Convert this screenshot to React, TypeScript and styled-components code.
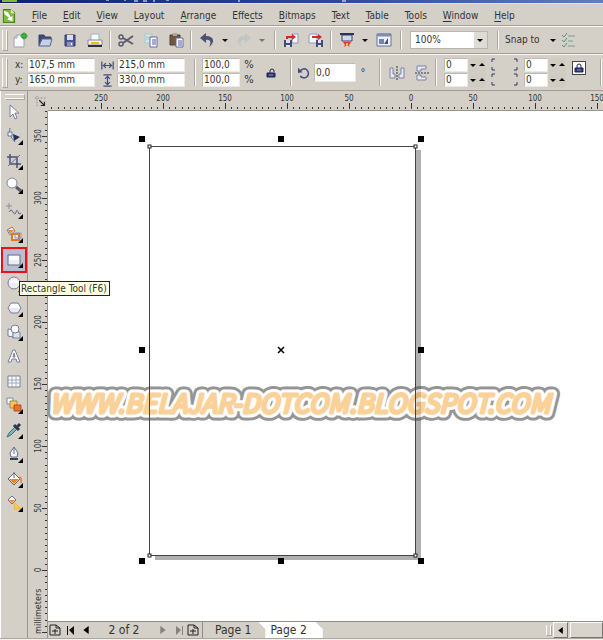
import React from "react";
import styled, { createGlobalStyle, css } from "styled-components";

const Global = createGlobalStyle`
  * { box-sizing: border-box; }
  html, body, #root { height: 100%; }
  body {
    margin: 0;
    overflow: hidden;
    background: #d4d0c8;
    color: #333;
    font: 10px/14px "DejaVu Sans Condensed", "DejaVu Sans", sans-serif;
  }
  button, input, select { font: inherit; color: inherit; margin: 0; }
  button { padding: 0; border: 0; background: none; }
  svg { display: block; flex: none; }
`;

/* ---------- shell ---------- */

const Shell = styled.div`
  height: 100vh;
  display: flex;
  flex-direction: column;
  background: #d4d0c8;
  border-bottom: 1px solid #f4f2ee;
`;

const TitleBar = styled.header`
  height: 4px;
  flex: none;
  overflow: hidden;
  background: linear-gradient(90deg, #0a246a, #2b4a94 55%, #5c82bd);
  border-bottom: 1px solid #e4e2dd;
`;

const MenuBar = styled.nav`
  height: 22px;
  flex: none;
  display: flex;
  align-items: center;
  gap: 16px;
  padding: 2px 4px 0 2px;
  border-bottom: 1px solid #a5a29b;
`;

const MenuButton = styled.button`
  line-height: 16px;
  white-space: nowrap;
  u { text-underline-offset: 2px; }
`;

const Toolbar = styled.div<{ $tall?: boolean }>`
  height: ${(p) => (p.$tall ? 37 : 28)}px;
  flex: none;
  display: flex;
  align-items: center;
  overflow: hidden;
  padding-left: 2px;
  border-top: 1px solid #f7f6f3;
  border-bottom: 1px solid #a09d96;
`;

const Grip = styled.span<{ $flat?: boolean }>`
  flex: none;
  align-self: ${(p) => (p.$flat ? "center" : "stretch")};
  ${(p) =>
    p.$flat
      ? css`width: 19px; height: 5px; border-width: 1px 0;`
      : css`width: 5px; margin: 3px 0; border-width: 0 1px;`}
  border-style: solid;
  border-color: #fbfaf8;
  box-shadow: 1px 1px 0 #aaa79f;
`;

const Rule = styled.span<{ $before?: number; $after?: number }>`
  flex: none;
  align-self: stretch;
  width: 2px;
  margin: 4px ${(p) => p.$after ?? 2}px 4px ${(p) => p.$before ?? 2}px;
  border-left: 1px solid #aaa79f;
  border-right: 1px solid #fbfaf8;
`;

const IconButton = styled.button<{ $narrow?: boolean }>`
  flex: none;
  width: ${(p) => (p.$narrow ? 12 : 25)}px;
  height: 22px;
  display: grid;
  place-items: center;
`;

const SelectBox = styled.div`
  flex: none;
  width: 78px;
  height: 18px;
  display: grid;
  grid-template-columns: 1fr 14px;
  align-items: center;
  background: linear-gradient(90deg, #fff 63px, #dedbd4 63px);
  border: 1px solid #b9b6ae;
`;

const Select = styled.select`
  grid-area: 1 / 1 / 2 / 3;
  width: 100%;
  height: 16px;
  padding: 0 16px 0 4px;
  border: 0;
  background: none;
  appearance: none;
`;

const SelectArrow = styled.span`
  grid-area: 1 / 2;
  justify-self: center;
  pointer-events: none;
`;

const SnapButton = styled.button`
  display: flex;
  align-items: center;
  gap: 10px;
  white-space: nowrap;
`;

/* ---------- property bar ---------- */

const FieldGrid = styled.div<{ $cols: string; $before?: number }>`
  flex: none;
  display: grid;
  grid-template-columns: ${(p) => p.$cols};
  grid-auto-rows: 14px;
  row-gap: 1px;
  align-items: center;
  margin-left: ${(p) => p.$before ?? 0}px;
`;

const Caption = styled.label`
  padding-left: 1px;
`;

const Field = styled.input<{ $tall?: boolean }>`
  width: 100%;
  min-width: 0;
  height: ${(p) => (p.$tall ? 19 : 14)}px;
  padding: 0 1px;
  border: 1px solid #bfbcb4;
  border-right-color: #eceae6;
  border-bottom-color: #eceae6;
  background: #fff;
`;

const Spinner = styled.div`
  height: 14px;
  display: grid;
  grid-template-columns: 24px 9px 9px;
  border-right: 1px solid #fbfaf8;
  border-bottom: 1px solid #fbfaf8;
`;

const SpinButton = styled.button`
  display: grid;
  place-items: center;
  background: #d0ccc2;
`;

const Centered = styled.span<{ $w: number }>`
  flex: none;
  width: ${(p) => p.$w}px;
  display: grid;
  place-items: center;
  font-size: 11px;
`;

const LockButton = styled.button`
  flex: none;
  width: 14px;
  height: 14px;
  margin: 0 14px 10px 6px;
  display: grid;
  place-items: center;
  background: #fff;
  border: 1px solid #444;
`;

/* ---------- work area ---------- */

const Work = styled.main`
  flex: 1;
  min-height: 0;
  display: grid;
  grid-template-columns: 28px 20px minmax(0, 1fr);
  grid-template-rows: 20px minmax(0, 1fr) 17px;
  border-bottom: 1px solid #aaa79f;
`;

const Toolbox = styled.aside`
  grid-row: 1 / 4;
  display: flex;
  flex-direction: column;
  align-items: center;
  padding-top: 3px;
  border-left: 1px solid #fff;
  border-right: 1px solid #98958e;
`;

const ToolList = styled.div`
  height: 415px;
  width: 100%;
  margin-top: 1px;
  display: flex;
  flex-direction: column;
  justify-content: space-between;
`;

const ToolItem = styled.div`
  position: relative;
  height: 24px;
`;

const ToolButton = styled.button<{ $active?: boolean }>`
  width: 26px;
  height: 24px;
  display: grid;
  place-items: center;
  ${(p) =>
    p.$active &&
    css`
      height: 26px;
      background: #b9bdcd;
      border: 2px solid #ec1018;
    `}
`;

const Flyout = styled.svg`
  position: absolute;
  right: 4px;
  bottom: 3px;
`;

const Tooltip = styled.div`
  position: absolute;
  z-index: 2;
  left: 18px;
  top: 34px;
  padding: 0 2px 0 1px;
  background: #ffffe1;
  border: 1px solid #222;
  line-height: 13px;
  white-space: nowrap;
`;

const Corner = styled.div`
  display: grid;
  place-items: center;
  padding-left: 4px;
`;

const HorizontalRuler = styled.div`
  overflow: hidden;
  border-bottom: 1px solid #99968f;
`;

const VerticalRuler = styled.div`
  grid-row: 2 / 4;
  grid-column: 2;
  overflow: hidden;
  border-right: 1px solid #99968f;
`;

const Canvas = styled.section`
  grid-column: 3;
  overflow: hidden;
  background: #fff;
`;

const PageBar = styled.footer`
  grid-column: 3;
  display: flex;
  align-items: stretch;
  border-top: 1px solid #8f8c86;
  overflow: hidden;
  font-size: 12px;
`;

const PagerButton = styled.button<{ $w: number }>`
  flex: none;
  width: ${(p) => p.$w}px;
  display: grid;
  place-items: center;
`;

const PageCount = styled.span`
  flex: none;
  width: 60px;
  text-align: center;
  line-height: 16px;
`;

const TabStrip = styled.div`
  flex: 1;
  display: flex;
  margin-left: 2px;
  border-left: 1px solid #8f8c86;
`;

const Tab = styled.button<{ $active?: boolean }>`
  flex: none;
  padding: 0 12px;
  line-height: 16px;
  ${(p) =>
    p.$active &&
    css`
      margin-left: -5px;
      padding-right: 16px;
      background: #fff;
      clip-path: polygon(0 0, 57px 0, 100% 7px, 100% 100%, 7px 100%, 7px 7px);
    `}
`;

const ScrollTrack = styled.div`
  flex: none;
  width: 57px;
  display: grid;
  grid-template-columns: 5px 15px minmax(0, 1fr);
  gap: 2px;
`;

const ScrollButton = styled.button`
  display: grid;
  place-items: center;
  background: #d8d4cc;
  border: 1px solid #fbfaf8;
  border-right-color: #77746e;
  border-bottom-color: #77746e;
`;

/* ---------- drawings ---------- */

const Icon = ({ children, size = 16, box = 16 }: { children: React.ReactNode; size?: number; box?: number }) => (
  <svg width={size} height={size} viewBox={`0 0 ${box} ${box}`} fill="none" aria-hidden="true">
    {children}
  </svg>
);

const Triangle = ({ dir = "down", fill = "#000", size = 6 }: { dir?: "down" | "up" | "left" | "right"; fill?: string; size?: number }) => {
  const d = { down: "M0 2h6L3 5z", up: "M0 4h6L3 1z", left: "M5 0v6L1 3z", right: "M1 0v6l4-3z" }[dir];
  return (
    <svg width={size} height={size} viewBox="0 0 6 6" fill={fill} aria-hidden="true">
      <path d={d} />
    </svg>
  );
};

const ink = "#454b78";

const CorelLogo = () => (
  <Icon size={14}>
    <path d="M1 0h9l5 4v12H1z" fill="#3f7a14" />
    <path d="M2 1h8v4h4v10H2z" fill="#7fbb35" />
    <path d="M2 2l5 2 3 5 2-1v6l-6-2 2-2-5-4z" fill="#fff" />
    <path d="M10 0v5h5z" fill="#d8edbd" />
  </Icon>
);

const icons: Record<string, React.ReactNode> = {
  New: <Icon><path d="M2 6l3-3h7v12H2z" fill="#fafbff" stroke="#9ba1b5" /><path d="M2 6h3V3" stroke="#9ba1b5" /><circle cx="12" cy="4" r="3" fill="#239b22" /><path d="M12 0v8M8 4h8" stroke="#53b94a" /></Icon>,
  Open: <Icon><path d="M2 14V3h5l1 2h6v3" fill="#3f4a78" stroke="#374069" /><path d="M2 14l3-7h10l-2 7z" fill="#c6d0ea" stroke="#596493" /></Icon>,
  Save: <Icon><path d="M3 3h10v11H3z" fill="#4d5590" stroke="#30396f" /><path d="M5 3h6v5H5z" fill="#d8ddf0" /><path d="M5 10h6v4H5z" fill="#8890bd" /><path d="M9 11h1v2H9z" fill="#fff" /></Icon>,
  Print: <Icon><path d="M4 8V2h8v6" fill="#f4fbff" stroke="#9fb4bf" /><path d="M1 8h14v5H1z" fill="#f6f3ea" stroke="#8a8a96" /><path d="M4 11h8" stroke="#e4bc2c" strokeWidth="2" /><path d="M1 14h14" stroke="#30303d" strokeWidth="2" /></Icon>,
  Cut: <Icon><path d="M5 6l10 6M5 11l10-7" stroke="#5c5d68" strokeWidth="2" /><circle cx="3" cy="5" r="2" stroke="#565b72" strokeWidth="1.5" /><circle cx="3" cy="12" r="2" stroke="#565b72" strokeWidth="1.5" /></Icon>,
  Copy: <Icon><path d="M2 2h7v9H2z" fill="#d4e8e8" stroke="#a0cccc" /><path d="M3 5h5M3 7h5" stroke="#9bcaca" /><path d="M7 5h7v10H7z" fill="#fff" stroke="#626aa4" /><path d="M9 8h4M9 10h4M9 12h4" stroke="#4a59aa" /></Icon>,
  Paste: <Icon><path d="M2 3h10v10H2z" fill="#72583d" stroke="#51402f" /><path d="M5 1h4v3H5z" fill="#aaa6a0" /><path d="M8 6h7v9H8z" fill="#fff" stroke="#626aa4" /><path d="M10 9h4M10 11h4M10 13h4" stroke="#4a59aa" /></Icon>,
  Undo: <Icon><path d="M7 1L1 6l6 5V8c4-1 6 2 3 7 6-4 6-11-3-11z" fill="#4c5270" /></Icon>,
  Redo: <Icon><path d="M9 1l6 5-6 5V8c-4-1-6 2-3 7-6-4-6-11 3-11z" fill="#c1c5c8" /></Icon>,
  Import: <Icon><path d="M9 2h6v9H9z" fill="#f4f6ff" stroke="#8c97bd" /><path d="M1 8h8v7H1z" fill={ink} /><path d="M3 8h4v3H3zM3 13h4v2H3z" fill="#dfe2f2" /><path d="M3 7V4h6V2l4 3-4 3V6H5v1z" fill="#d42a28" /></Icon>,
  Export: <Icon><path d="M1 3l2-1h6v9H1z" fill="#f4f6ff" stroke="#8c97bd" /><path d="M8 8h7v7H8z" fill={ink} /><path d="M10 8h3v3h-3zM10 13h3v2h-3z" fill="#dfe2f2" /><path d="M4 4h6V2l4 3-4 3V6H4z" fill="#d42a28" /></Icon>,
  Launch: <Icon><path d="M3 3h10v6H3z" fill="#cbd9e9" stroke="#3a4269" /><path d="M1 2h14" stroke="#2d345c" strokeWidth="2" /><path d="M4 10h8l-2 3 1 2-3-2-3 2 1-2z" fill="#e33b20" /><path d="M7 11h2v2H7z" fill="#ffc229" /></Icon>,
  Welcome: <Icon><path d="M1 2h14v12H1z" fill="#eff3ff" stroke="#63719d" /><path d="M1 3h14" stroke="#7e8bb3" strokeWidth="3" /><path d="M3 7h5v5H3z" fill="#7482af" /><path d="M8 12l4-6v6z" fill="#444f83" /></Icon>,
};

const SnapIcon = () => (
  <Icon><path d="M2 3l2 2 3-4M2 8l2 2 3-4M2 13l2 2 3-4" stroke="#5b8f87" /><path d="M8 4h7M8 9h5M8 14h7" stroke="#7a9c96" /></Icon>
);

const Padlock = ({ open }: { open?: boolean }) => (
  <Icon size={10} box={10}>
    <path d={open ? "M4 5V3q0-2 2-2t2 2v1" : "M3 5V3q0-2 2-2t2 2v2"} stroke="#20264f" />
    <path d="M1 5h8v4H1z" fill="#303873" stroke="#1d234e" />
    <path d="M3 7h4" stroke="#8992cf" />
  </Icon>
);

const tools: { name: string; fly?: boolean; active?: boolean; art: React.ReactNode }[] = [
  { name: "Pick Tool", art: <path d="M4 1v12l3-3 2 5 2-1-2-5h4z" fill="#fff" stroke="#7b829e" /> },
  { name: "Shape Tool", fly: true, art: <><path d="M4 0q-2 7 5 14" stroke="#69779c" /><path d="M2 4h4v4H2z" fill="#e7f4ff" stroke="#69779c" /><path d="M7 6l7 3-6 4z" fill="#252e64" /></> },
  { name: "Crop Tool", fly: true, art: <><path d="M4 1v10h11M1 4h10v11" stroke="#4b5174" strokeWidth="1.5" /><path d="M2 13L14 2" stroke="#6b7090" /></> },
  { name: "Zoom Tool", fly: true, art: <><path d="M10 10l5 4" stroke="#5c5964" strokeWidth="3" /><circle cx="6" cy="6" r="5" fill="#f8fcff" stroke="#81889e" /></> },
  { name: "Freehand Tool", fly: true, art: <><path d="M3 1v6M0 4h6" stroke="#8b8e9c" /><path d="M3 10q2-4 4 0t3 0 3 2l2-1" stroke="#5d6690" /></> },
  { name: "Smart Fill Tool", fly: true, art: <><path d="M1 4l5-3 3 4-5 4z" fill="#f2f2fa" stroke="#777e99" /><path d="M2 4h6l-4 4z" fill="#e78728" /><path d="M6 8h7v6H6z" fill="#efeeff" stroke="#df7922" strokeWidth="2" /><path d="M9 7h6v5H9z" stroke="#8991b4" /></> },
  { name: "Rectangle Tool", fly: true, active: true, art: <><rect x="2" y="3" width="12" height="10" fill="#eceef5" stroke="#666d8d" /><path d="M3 4h10v4H3z" fill="#fff" /></> },
  { name: "Ellipse Tool", fly: true, art: <><circle cx="8" cy="8" r="6" fill="#eceef5" stroke="#777e99" /><path d="M4 8q0-5 8-2v2z" fill="#fff" /></> },
  { name: "Polygon Tool", fly: true, art: <><path d="M5 3h7l3 5-3 5H5L2 8z" fill="#e8eaf3" stroke="#777e99" /><path d="M5 4h7l2 4H3z" fill="#fff" /></> },
  { name: "Basic Shapes", fly: true, art: <><path d="M2 5l6 1-1 7-5-1z" fill="#f6f7ff" stroke="#777e99" /><path d="M7 8h7v6H7z" fill="#dfe2ee" stroke="#777e99" /><circle cx="9" cy="5" r="4" fill="#f8f9ff" stroke="#777e99" /></> },
  { name: "Text Tool", art: <path d="M2 14L7 2h2l5 12h-3l-1-3H6l-1 3zM7 9h2L8 5z" fill="#fff" stroke="#777e99" /> },
  { name: "Table Tool", art: <><path d="M2 3h12v11H2z" fill="#fff" stroke="#777e99" /><path d="M6 3v11M10 3v11M2 7h12M2 10h12" stroke="#a0a5bc" /></> },
  { name: "Interactive Blend", fly: true, art: <><path d="M1 1h6v6H1z" fill="#f5f8ff" stroke="#818ca9" /><path d="M4 4h7v7H4z" fill="#ffc34e" stroke="#a5894f" /><path d="M8 8h7v6H8z" fill="#f36c21" stroke="#af5225" /></> },
  { name: "Eyedropper Tool", fly: true, art: <><path d="M1 15l2-4 6-6 2 2-6 6z" fill="#7fb3b2" stroke="#477078" /><path d="M8 3l5 5M10 6l4-4" stroke="#303452" strokeWidth="3" /></> },
  { name: "Outline Pen", fly: true, art: <><path d="M5 11L4 7l4-6 4 6-1 4z" fill="#f8faff" stroke="#666d8d" /><path d="M8 2v6" stroke="#666d8d" /><path d="M4 13h8" stroke="#39405d" strokeWidth="2" /></> },
  { name: "Fill Tool", fly: true, art: <><path d="M8 2l6 6-6 6-6-6z" fill="#fff" stroke="#616780" /><path d="M3 8h10l-5 5z" fill="#ec8520" /><path d="M8 7V1" stroke="#616780" /><path d="M13 6q3 1 2 6" stroke="#e98a5c" strokeWidth="2" /></> },
  { name: "Interactive Fill", fly: true, art: <><path d="M6 1l4 4-4 4-4-4z" fill="#fff" stroke="#666c83" /><path d="M3 5h6L6 8z" fill="#e88c31" /><path d="M9 8l2 2 4 4H8z" fill="#ffc951" stroke="#f4b23d" /></> },
];

const MM = 62 / 50;

const HRuler = () => (
  <svg width="100%" height="19" aria-hidden="true" shapeRendering="crispEdges">
    {Array.from({ length: 180 }, (_, i) => {
      const mm = (i - 58) * 5;
      const x = Math.round(363 + mm * MM);
      const h = mm % 50 === 0 ? 6 : 2;
      return <rect key={i} x={x} y={18 - h} width="1" height={h} fill="#333" />;
    })}
    {[-250, -200, -150, -100, -50, 0, 50, 100, 150].map((mm) => (
      <text key={mm} x={363 + mm * MM} y="10" fontSize="8" textAnchor="middle" fill="#333">{Math.abs(mm)}</text>
    ))}
  </svg>
);

const VRuler = () => (
  <svg width="19" height="100%" aria-hidden="true" shapeRendering="crispEdges">
    {Array.from({ length: 140 }, (_, i) => {
      const mm = 370 - i * 5;
      const y = Math.round(459 - mm * MM);
      const w = mm % 50 === 0 ? 5 : 2;
      return <rect key={i} x={19 - w} y={y} width={w} height="1" fill="#333" />;
    })}
    {[350, 300, 250, 200, 150, 100, 50, 0].map((mm) => (
      <text key={mm} transform={`translate(13 ${459 - mm * MM}) rotate(-90)`} fontSize="8" textAnchor="middle" fill="#333">{mm}</text>
    ))}
    <text transform="translate(13 523) rotate(-90)" fontSize="9" fill="#333">millimeters</text>
  </svg>
);

const Watermark = styled.text`
  font: italic 400 26px "Noto Sans CJK SC", sans-serif;
  stroke-linejoin: round;
`;

const Drawing = () => {
  const mark = "WWW.BELAJAR-DOTCOM.BLOGSPOT.COM";
  return (
    <svg width="100%" height="100%" role="img" aria-label="Page 2 drawing">
      <path d="M107 444h266V39h-5v405z" fill="#b0b0b0" />
      <path d="M107 444h266v5H107z" fill="#b0b0b0" />
      <g opacity="0.6">
        <Watermark x="2" y="302" fill="#505050" stroke="#505050" strokeWidth="15" aria-hidden="true">{mark}</Watermark>
        <Watermark x="2" y="302" fill="#fff" stroke="#fff" strokeWidth="9" aria-hidden="true">{mark}</Watermark>
        <Watermark x="2" y="302" fill="#f8b457" stroke="#f8b457" strokeWidth="3">{mark}</Watermark>
      </g>
      <path d="M101.500 35.500h266v409h-266z" stroke="#444" fill="none" />
      {[101, 367].map((x) => [35, 444].map((y) => (
        <rect key={`${x}-${y}`} x={x - 1} y={y - 1} width="3" height="3" fill="#fff" stroke="#222" />
      )))}
      {[94, 233, 373].map((x) => [28, 239, 450].map((y) =>
        x === 233 && y === 239 ? (
          <path key="centre" d="M230 236l6 6m0-6l-6 6" stroke="#000" strokeWidth="1.500" />
        ) : (
          <rect key={`${x}-${y}`} x={x - 3} y={y - 3} width="6" height="6" fill="#000" />
        )
      ))}
    </svg>
  );
};

const PlusPage = () => (
  <Icon size={12} box={12}>
    <path d="M1 1h6l4 3v7H1z" stroke="#222" /><path d="M7 1v3h4M6 5v5M3 7h6" stroke="#222" />
  </Icon>
);

const CornerMarks = () => (
  <svg width="28" height="14" fill="none" stroke="#333b5e" aria-hidden="true">
    <path d="M4 1H1v3M1 9v3h3M23 1h3v3M26 9v3h-3" />
  </svg>
);

/* ---------- page ---------- */

const menus: [string, string, string][] = [
  ["", "F", "ile"], ["", "E", "dit"], ["", "V", "iew"], ["", "L", "ayout"], ["", "A", "rrange"], ["Effe", "c", "ts"],
  ["", "B", "itmaps"], ["", "T", "ext"], ["", "T", "able"], ["T", "o", "ols"], ["", "W", "indow"], ["", "H", "elp"],
];

const Tool = ({ name }: { name: string }) => <IconButton aria-label={name}>{icons[name]}</IconButton>;

const More = ({ name, muted }: { name: string; muted?: boolean }) => (
  <IconButton $narrow aria-label={name}><Triangle fill={muted ? "#77746e" : "#111"} /></IconButton>
);

const Spin = ({ label }: { label: string }) => (
  <Spinner>
    <Field aria-label={label} defaultValue="0" />
    <SpinButton aria-label={`Decrease ${label}`}><Triangle /></SpinButton>
    <SpinButton aria-label={`Increase ${label}`}><Triangle dir="up" /></SpinButton>
  </Spinner>
);

export default function App() {
  return (
    <Shell>
      <Global />
      <TitleBar>
        <svg width="360" height="3" aria-hidden="true">
          <path d="M2 0h15v2H2z" fill="#85b82f" />
          <path d="M106 0h3M125 0v1M134 1h4M143 1h4M154 0v2M166 0h3M239 0v2M342 1h4" stroke="#fff" fill="none" />
        </svg>
      </TitleBar>

      <MenuBar aria-label="Main menu">
        <CorelLogo />
        {menus.map(([a, key, b]) => (
          <MenuButton key={a + key + b}>{a}<u>{key}</u>{b}</MenuButton>
        ))}
      </MenuBar>

      <Toolbar role="toolbar" aria-label="Standard">
        <Grip />
        <Tool name="New" /><Tool name="Open" /><Tool name="Save" /><Tool name="Print" />
        <Rule />
        <Tool name="Cut" /><Tool name="Copy" /><Tool name="Paste" />
        <Rule />
        <Tool name="Undo" /><More name="Undo history" />
        <Tool name="Redo" /><More name="Redo history" muted />
        <Rule $before={6} />
        <Tool name="Import" /><Tool name="Export" />
        <Rule />
        <Tool name="Launch" /><More name="Launch list" /><Tool name="Welcome" />
        <Rule $before={4} $after={8} />
        <SelectBox>
          <Select aria-label="Zoom level" defaultValue="100%"><option>100%</option><option>200%</option></Select>
          <SelectArrow><Triangle /></SelectArrow>
        </SelectBox>
        <Rule $before={9} $after={6} />
        <SnapButton>Snap to <Triangle /></SnapButton>
        <IconButton aria-label="Options"><SnapIcon /></IconButton>
      </Toolbar>

      <Toolbar $tall role="toolbar" aria-label="Properties">
        <Grip />
        <FieldGrid $cols="13px 68px" $before={7}>
          <Caption htmlFor="pos-x">x:</Caption><Field id="pos-x" defaultValue="107,5 mm" />
          <Caption htmlFor="pos-y">y:</Caption><Field id="pos-y" defaultValue="165,0 mm" />
        </FieldGrid>
        <FieldGrid $cols="16px 68px" $before={6}>
          <Icon size={13}><path d="M1 3v10M15 3v10M3 8h10M6 5L3 8l3 3M10 5l3 3-3 3" stroke={ink} strokeWidth="1.5" /></Icon>
          <Field aria-label="Width" defaultValue="215,0 mm" />
          <Icon size={13}><path d="M3 1h10M3 15h10M8 3v10M5 6l3-3 3 3M5 10l3 3 3-3" stroke={ink} strokeWidth="1.5" /></Icon>
          <Field aria-label="Height" defaultValue="330,0 mm" />
        </FieldGrid>
        <Rule $before={9} $after={6} />
        <FieldGrid $cols="38px 18px">
          <Field aria-label="Horizontal scale" defaultValue="100,0" /><Centered $w={18}>%</Centered>
          <Field aria-label="Vertical scale" defaultValue="100,0" /><Centered $w={18}>%</Centered>
        </FieldGrid>
        <IconButton aria-label="Lock ratio"><Padlock open /></IconButton>
        <Rule $before={7} $after={6} />
        <Icon size={12}><path d="M3 5a6 6 0 1 1 0 7" stroke={ink} strokeWidth="2" /><path d="M0 8V1l6 6z" fill={ink} /></Icon>
        <FieldGrid $cols="42px" $before={4}><Field aria-label="Rotation" $tall defaultValue="0,0" /></FieldGrid>
        <Centered $w={14}>°</Centered>
        <Rule $before={9} $after={3} />
        <IconButton aria-label="Mirror horizontally"><Icon><path d="M1 3h3v6h2v4H1zM15 3h-3v6h-2v4h5z" fill="#e7eaf5" stroke="#7a82a7" /><path d="M8 1v14" stroke="#333" strokeDasharray="2 1" /></Icon></IconButton>
        <IconButton aria-label="Mirror vertically"><Icon><path d="M3 1h9v3H7v2H3zM3 15h9v-3H7v-2H3z" fill="#e7eaf5" stroke="#7a82a7" /><path d="M1 8h14" stroke="#333" strokeDasharray="2 1" /></Icon></IconButton>
        <Rule $before={1} $after={7} />
        <FieldGrid $cols="42px"><Spin label="top left corner" /><Spin label="bottom left corner" /></FieldGrid>
        <FieldGrid $cols="28px" $before={5}><CornerMarks /><CornerMarks /></FieldGrid>
        <FieldGrid $cols="42px" $before={5}><Spin label="top right corner" /><Spin label="bottom right corner" /></FieldGrid>
        <LockButton aria-label="Round corners together"><Padlock /></LockButton>
        <Rule $before={0} />
      </Toolbar>

      <Work>
        <Toolbox aria-label="Toolbox">
          <Grip $flat />
          <ToolList>
            {tools.map((t) => (
              <ToolItem key={t.name}>
                <ToolButton $active={t.active} aria-label={t.name}><Icon>{t.art}</Icon></ToolButton>
                {t.fly && <Flyout width="5" height="5"><path d="M5 0v5H0z" /></Flyout>}
                {t.active && <Tooltip role="tooltip">Rectangle Tool (F6)</Tooltip>}
              </ToolItem>
            ))}
          </ToolList>
        </Toolbox>
        <Corner><Icon size={12}><path d="M1 4h14M4 1v14" stroke="#777" strokeDasharray="2 2" /><path d="M7 7l7 7M14 9v5H9" stroke="#222" strokeWidth="1.5" /></Icon></Corner>
        <HorizontalRuler><HRuler /></HorizontalRuler>
        <VerticalRuler><VRuler /></VerticalRuler>
        <Canvas><Drawing /></Canvas>
        <PageBar>
          <PagerButton $w={14} aria-label="Add page before"><PlusPage /></PagerButton>
          <PagerButton $w={16} aria-label="First page"><Icon size={9} box={9}><path d="M1 0h1v9H1zM8 0v9L3 4z" fill="#111" /></Icon></PagerButton>
          <PagerButton $w={16} aria-label="Previous page"><Triangle dir="left" size={8} /></PagerButton>
          <PageCount>2 of 2</PageCount>
          <PagerButton $w={18} aria-label="Next page"><Triangle dir="right" size={8} fill="#85827c" /></PagerButton>
          <PagerButton $w={14} aria-label="Last page"><Icon size={9} box={9}><path d="M7 0h1v9H7zM1 0v9l5-5z" fill="#85827c" /></Icon></PagerButton>
          <PagerButton $w={14} aria-label="Add page after"><PlusPage /></PagerButton>
          <TabStrip><Tab>Page 1</Tab><Tab $active>Page 2</Tab></TabStrip>
          <ScrollTrack>
            <Grip />
            <ScrollButton aria-label="Scroll left"><Triangle dir="left" size={7} /></ScrollButton>
            <ScrollButton aria-label="Scroll thumb" />
          </ScrollTrack>
        </PageBar>
      </Work>
    </Shell>
  );
}
